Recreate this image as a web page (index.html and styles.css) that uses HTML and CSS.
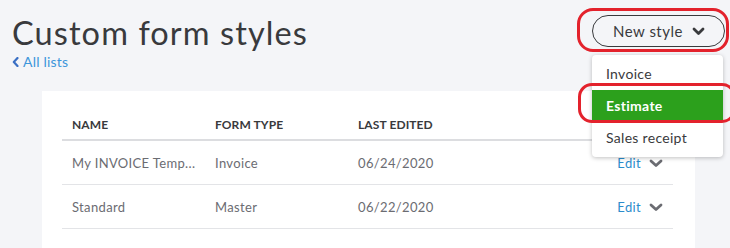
FILE: index.html
```html
<!DOCTYPE html>
<html lang="en">
<head>
<meta charset="utf-8">
<title>Custom form styles</title>
<link rel="stylesheet" href="styles.css">
</head>
<body>
<div class="page">
  <header class="top">
    <div class="heading">
      <h1 class="title">Custom form styles</h1>
      <a class="back" href="#"><svg class="back-icon" width="7" height="10" viewBox="0 0 7 10"><path d="M5.5 1 L1.8 5 L5.5 9" fill="none" stroke="#3a6fc4" stroke-width="2.2" stroke-linecap="round" stroke-linejoin="round"/></svg>All lists</a>
    </div>
    <div class="actions">
      <button class="new-style" type="button">New style<svg class="chev" width="13" height="9" viewBox="0 0 13 9"><path d="M2 2 L6.5 6.5 L11 2" fill="none" stroke="#393a3d" stroke-width="2.8" stroke-linecap="round" stroke-linejoin="round"/></svg></button>
      <ul class="menu">
        <li class="menu-item">Invoice</li>
        <li class="menu-item active">Estimate</li>
        <li class="menu-item">Sales receipt</li>
      </ul>
      <span class="mark mark-button"></span>
      <span class="mark mark-item"></span>
    </div>
  </header>
  <section class="card">
    <table class="styles-table">
      <thead>
        <tr><th class="c-name">NAME</th><th class="c-type">FORM TYPE</th><th class="c-date">LAST EDITED</th><th class="c-act"></th></tr>
      </thead>
      <tbody>
        <tr><td>My INVOICE Temp...</td><td>Invoice</td><td>06/24/2020</td><td class="c-act"><a class="edit" href="#">Edit</a><svg class="chev-sm" width="14" height="9" viewBox="0 0 14 9"><path d="M2 2 L7 6.5 L12 2" fill="none" stroke="#6b6c72" stroke-width="2.8" stroke-linecap="round" stroke-linejoin="round"/></svg></td></tr>
        <tr><td>Standard</td><td>Master</td><td>06/22/2020</td><td class="c-act"><a class="edit" href="#">Edit</a><svg class="chev-sm" width="14" height="9" viewBox="0 0 14 9"><path d="M2 2 L7 6.5 L12 2" fill="none" stroke="#6b6c72" stroke-width="2.8" stroke-linecap="round" stroke-linejoin="round"/></svg></td></tr>
      </tbody>
    </table>
  </section>
</div>
</body>
</html>
```

FILE: styles.css
```css
html, body {
  margin: 0;
  padding: 0;
}
body {
  background: #f4f5f8;
  font-family: Lato, "Open Sans", sans-serif;
  color: #393a3d;
  width: 730px;
  height: 248px;
  overflow: hidden;
}
.page {
  display: flex;
  flex-direction: column;
}
.top {
  display: flex;
  justify-content: space-between;
  align-items: flex-start;
  height: 91px;
  box-sizing: border-box;
  padding: 15px 5px 0 12px;
}
.heading {
  display: flex;
  flex-direction: column;
}
.title {
  margin: 0;
  font-size: 32.5px;
  font-weight: 400;
  line-height: 36px;
  color: #393a3d;
  letter-spacing: 1.1px;
}
.back {
  display: flex;
  align-items: center;
  gap: 4px;
  font-size: 14px;
  line-height: 18px;
  margin-top: 2px;
  color: #3d96db;
  text-decoration: none;
  letter-spacing: 0.2px;
}
.back-icon {
  display: block;
}
.actions {
  position: relative;
}
.new-style {
  display: flex;
  align-items: center;
  gap: 9px;
  width: 133px;
  height: 32px;
  box-sizing: border-box;
  padding: 0 0 0 20px;
  border: 1.6px solid #393a3d;
  border-radius: 16px;
  background: #f4f5f8;
  font-family: Lato, "Open Sans", sans-serif;
  font-size: 15px;
  letter-spacing: 0.5px;
  color: #393a3d;
}
.chev {
  display: block;
}
.menu {
  position: absolute;
  top: 40px;
  left: 0;
  width: 131px;
  margin: 0;
  padding: 3px 0;
  list-style: none;
  background: #fff;
  border-radius: 4px;
  box-shadow: 0 1px 4px rgba(0, 0, 0, 0.25);
  z-index: 2;
}
.menu-item {
  height: 32px;
  line-height: 32px;
  padding: 0 14px;
  font-size: 14px;
  letter-spacing: 0.3px;
  color: #393a3d;
}
.menu-item.active {
  background: #2ca01c;
  color: #fff;
  font-weight: 700;
}
.mark {
  position: absolute;
  border: 3px solid #e3222c;
  box-sizing: border-box;
  z-index: 3;
}
.mark-button {
  top: -7px;
  left: -15px;
  width: 152px;
  height: 44px;
  border-radius: 16px;
}
.mark-item {
  top: 68px;
  left: -14px;
  width: 158px;
  height: 40px;
  border-radius: 14px;
}
.card {
  margin-left: 42px;
  width: 653px;
  height: 157px;
  background: #fff;
  box-sizing: border-box;
  padding: 19px 22px 0 20px;
}
.styles-table {
  width: 100%;
  border-collapse: collapse;
  font-size: 13px;
  letter-spacing: 0.35px;
}
.styles-table th {
  text-align: left;
  font-size: 12px;
  font-weight: 700;
  letter-spacing: 0.1px;
  color: #393a3d;
  height: 29px;
  padding: 0 0 0 10px;
  vertical-align: middle;
  border-bottom: 2px solid #dcdde0;
}
.styles-table td {
  height: 43px;
  padding: 0 0 0 10px;
  color: #6b6c72;
  border-bottom: 1px solid #e3e4e7;
  vertical-align: middle;
}
.c-name { width: 133px; }
.c-type { width: 133px; }
.c-date { width: 200px; }
.styles-table td.c-act {
  text-align: right;
  padding-right: 10px;
  white-space: nowrap;
}
.edit {
  color: #2b8ccc;
  text-decoration: none;
  font-size: 13px;
  margin-right: 8px;
  vertical-align: middle;
}
.chev-sm {
  vertical-align: middle;
}
```
